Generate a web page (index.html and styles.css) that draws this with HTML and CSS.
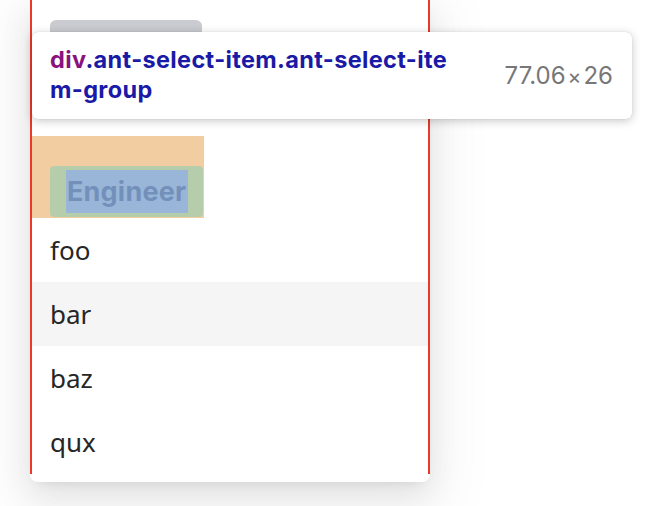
FILE: index.html
```html
<!DOCTYPE html>
<html>
<head>
<meta charset="utf-8">
<link rel="stylesheet" href="styles.css">
</head>
<body>
<div class="panel">
  <div class="list">
    <div class="group-first">
      <div class="pill"></div>
    </div>
    <div class="group-margin">
      <div class="group-pad">
        <div class="group-content">Engineer</div>
      </div>
    </div>
    <div class="option">foo</div>
    <div class="option active">bar</div>
    <div class="option">baz</div>
    <div class="option">qux</div>
  </div>
</div>
<div class="tooltip">
  <div class="selector"><span class="tag">div</span><span class="cls">.ant-select-item.ant-select-ite<br>m-group</span></div>
  <div class="dims">77.06<span class="times">×</span>26</div>
  <div class="arrow"></div>
</div>
</body>
</html>
```
FILE: styles.css
```css
html, body {
  margin: 0;
  padding: 0;
  background: #ffffff;
  width: 668px;
  height: 506px;
  overflow: hidden;
}

.panel {
  margin-left: 30px;
  width: 400px;
  background: #ffffff;
  border-radius: 0 0 8px 8px;
  padding-bottom: 8px;
  box-shadow: 0 6px 12px -8px rgba(0, 0, 0, 0.12), 0 12px 32px 0 rgba(0, 0, 0, 0.08), 0 18px 56px 16px rgba(0, 0, 0, 0.05);
}

.list {
  border-left: 2px solid #e8392b;
  border-right: 2px solid #e8392b;
  padding-top: 20px;
  font-family: "Noto Sans", "Open Sans", sans-serif;
}

.group-first {
  height: 116px;
  padding-left: 18px;
}

.pill {
  width: 152px;
  height: 51px;
  border-radius: 6px;
  background: linear-gradient(#cbccd1, #c3c4c9);
}

.group-margin {
  width: 153px;
  padding: 30px 1px 1px 18px;
  background: #f3cda2;
}

.group-pad {
  padding: 4px 15px 4px 16px;
  background: #b6cdab;
  border-radius: 4px;
}

.group-content {
  height: 43px;
  line-height: 44px;
  background: #99b6d9;
  font-family: Inter, "Liberation Sans", sans-serif;
  font-weight: 700;
  font-size: 27px;
  letter-spacing: 0.2px;
  padding-left: 1px;
  color: #7390ba;
  white-space: nowrap;
  overflow: hidden;
}

.option {
  height: 64px;
  line-height: 64px;
  padding-left: 18px;
  font-size: 26px;
  color: #262626;
}

.option.active {
  background: #f5f5f5;
}

.tooltip {
  position: absolute;
  left: 32px;
  top: 32px;
  width: 564px;
  height: 60px;
  padding: 13px 18px 14px 18px;
  background: #ffffff;
  border-radius: 6px;
  box-shadow: 0 2px 10px rgba(0, 0, 0, 0.22), 0 0 1px rgba(0, 0, 0, 0.2);
  display: flex;
  align-items: center;
  justify-content: space-between;
  font-family: Inter, "Liberation Sans", sans-serif;
}

.selector {
  font-weight: 700;
  font-size: 23.5px;
  letter-spacing: 0.35px;
  line-height: 30px;
  white-space: nowrap;
}

.tag {
  color: #881280;
}

.cls {
  color: #1a1aa6;
}

.dims {
  font-size: 24px;
  color: #777777;
  white-space: nowrap;
  padding-right: 1px;
}

.times {
  margin: 0 2px;
  font-size: 21px;
}

.arrow {
  position: absolute;
  left: 26px;
  top: 76px;
  width: 22px;
  height: 22px;
  background: #ffffff;
  transform: rotate(45deg);
  box-shadow: 4px 4px 8px -2px rgba(0, 0, 0, 0.12);
  z-index: -1;
}
```
